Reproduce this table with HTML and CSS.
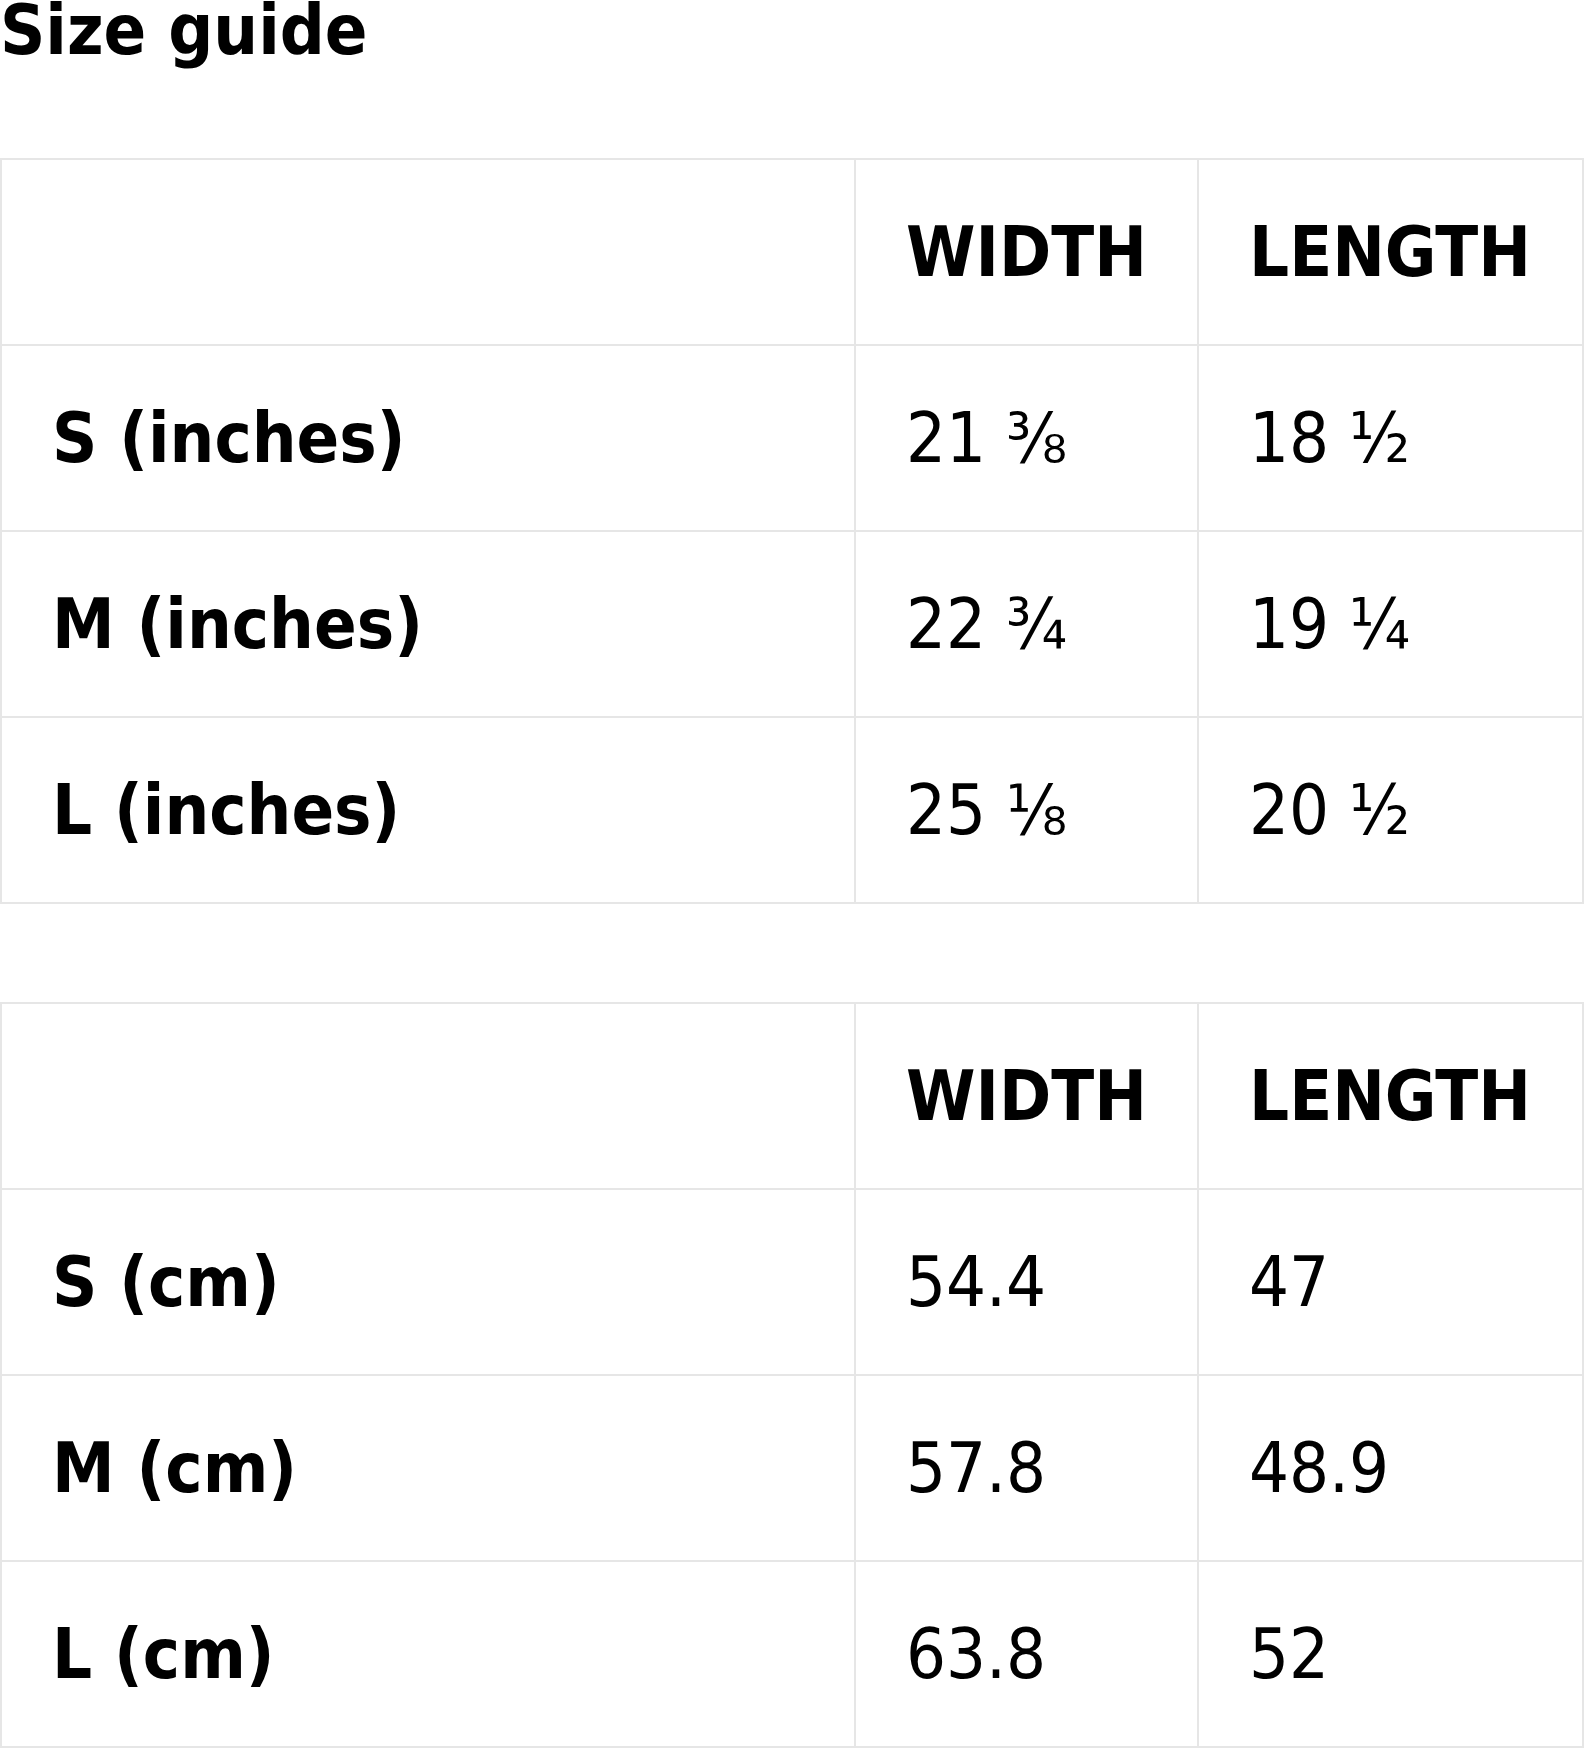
FILE: index.html
```html
<!DOCTYPE html>
<html>
<head>
<meta charset="utf-8">
<link rel="stylesheet" href="styles.css">
</head>
<body>
<h1 class="title">Size guide</h1>
<table class="sizes">
  <colgroup><col class="c-label"><col class="c-width"><col class="c-length"></colgroup>
  <tr><th></th><th>WIDTH</th><th>LENGTH</th></tr>
  <tr><th>S (inches)</th><td>21 ⅜</td><td>18 ½</td></tr>
  <tr><th>M (inches)</th><td>22 ¾</td><td>19 ¼</td></tr>
  <tr><th>L (inches)</th><td>25 ⅛</td><td>20 ½</td></tr>
</table>
<table class="sizes sizes-cm">
  <colgroup><col class="c-label"><col class="c-width"><col class="c-length"></colgroup>
  <tr><th></th><th>WIDTH</th><th>LENGTH</th></tr>
  <tr><th>S (cm)</th><td>54.4</td><td>47</td></tr>
  <tr><th>M (cm)</th><td>57.8</td><td>48.9</td></tr>
  <tr><th>L (cm)</th><td>63.8</td><td>52</td></tr>
</table>
</body>
</html>
```
FILE: styles.css
```css
html, body {
  margin: 0;
  padding: 0;
  background: #ffffff;
}
body {
  font-family: "DejaVu Sans Condensed", "DejaVu Sans", sans-serif;
  font-stretch: condensed;
  font-size: 70px;
  color: #000;
}
.title {
  margin: 0;
  font-size: 70px;
  line-height: 60px;
  font-weight: bold;
}
.sizes {
  border-collapse: collapse;
  table-layout: fixed;
  width: 1584px;
  margin-top: 98px;
}
.sizes-cm {
  margin-top: 98px;
}
.c-label { width: 854px; }
.c-width { width: 343px; }
.c-length { width: 385px; }
.sizes th, .sizes td {
  border: 2px solid #e6e6e6;
  padding: 50px 0 50px 50px;
  line-height: 84px;
  text-align: left;
  white-space: nowrap;
}
.sizes th { font-weight: bold; }
.sizes td { font-weight: normal; }
```
